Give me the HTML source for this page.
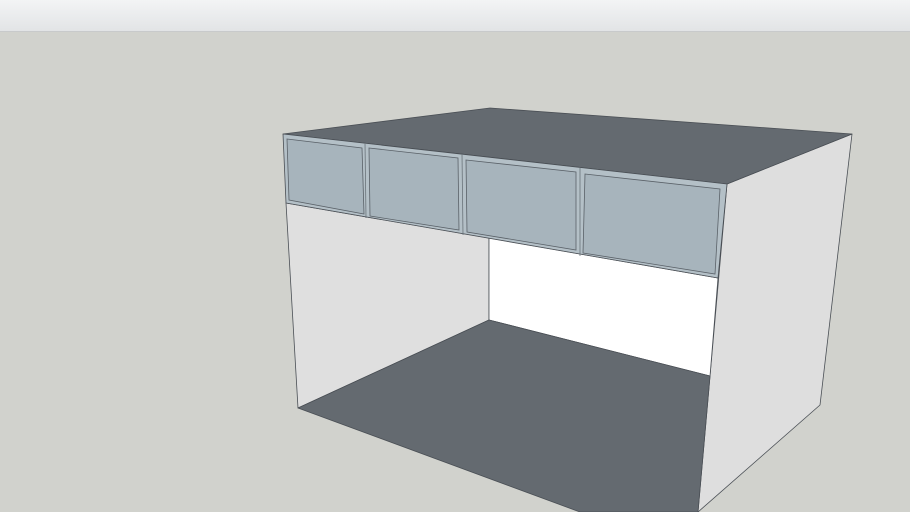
<!DOCTYPE html>
<html><head><style>
html,body{margin:0;padding:0;width:910px;height:512px;overflow:hidden;background:#d1d2cd}
.top{position:absolute;left:0;top:0;width:910px;height:31px;background:linear-gradient(#f3f4f5,#e2e4e6);border-bottom:1px solid #c8cacb}
svg{position:absolute;left:0;top:0}
</style></head><body>
<div class="top"></div>
<svg width="910" height="512" viewBox="0 0 910 512">
<g stroke="#4a4f55" stroke-width="0.8" stroke-linejoin="round">
<polygon points="727,184 852,134 820,405 698,512" fill="#dedede"/>
<polygon points="286,203 489,238 489,320 298,408" fill="#dfdfdf"/>
<polygon points="489,238 718,278 710,376 489,320" fill="#ffffff"/>
<polygon points="298,408 489,320 710,376 698,512 580,512" fill="#646a70"/>
<polygon points="283,134 490,108 852,134 727,184" fill="#646a70"/>
<polygon points="283,134 727,184 718,278 286,203" fill="#b4c0c7"/>
</g>
<g stroke="#5a6168" stroke-width="0.8" fill="#a7b4bc">
<polygon points="287,139 362,148 364,214 289,200"/>
<polygon points="369,148 458,158 459,230 370,216"/>
<polygon points="466,160 576,172 576,250 467,232"/>
<polygon points="585,174 720,189 715,274 583,253"/>
</g>
<g stroke="#6a737a" stroke-width="0.8">
<line x1="365" y1="143" x2="366" y2="218"/>
<line x1="462" y1="154" x2="463" y2="235"/>
<line x1="580" y1="168" x2="580" y2="256"/>
</g>
</svg>
</body></html>
